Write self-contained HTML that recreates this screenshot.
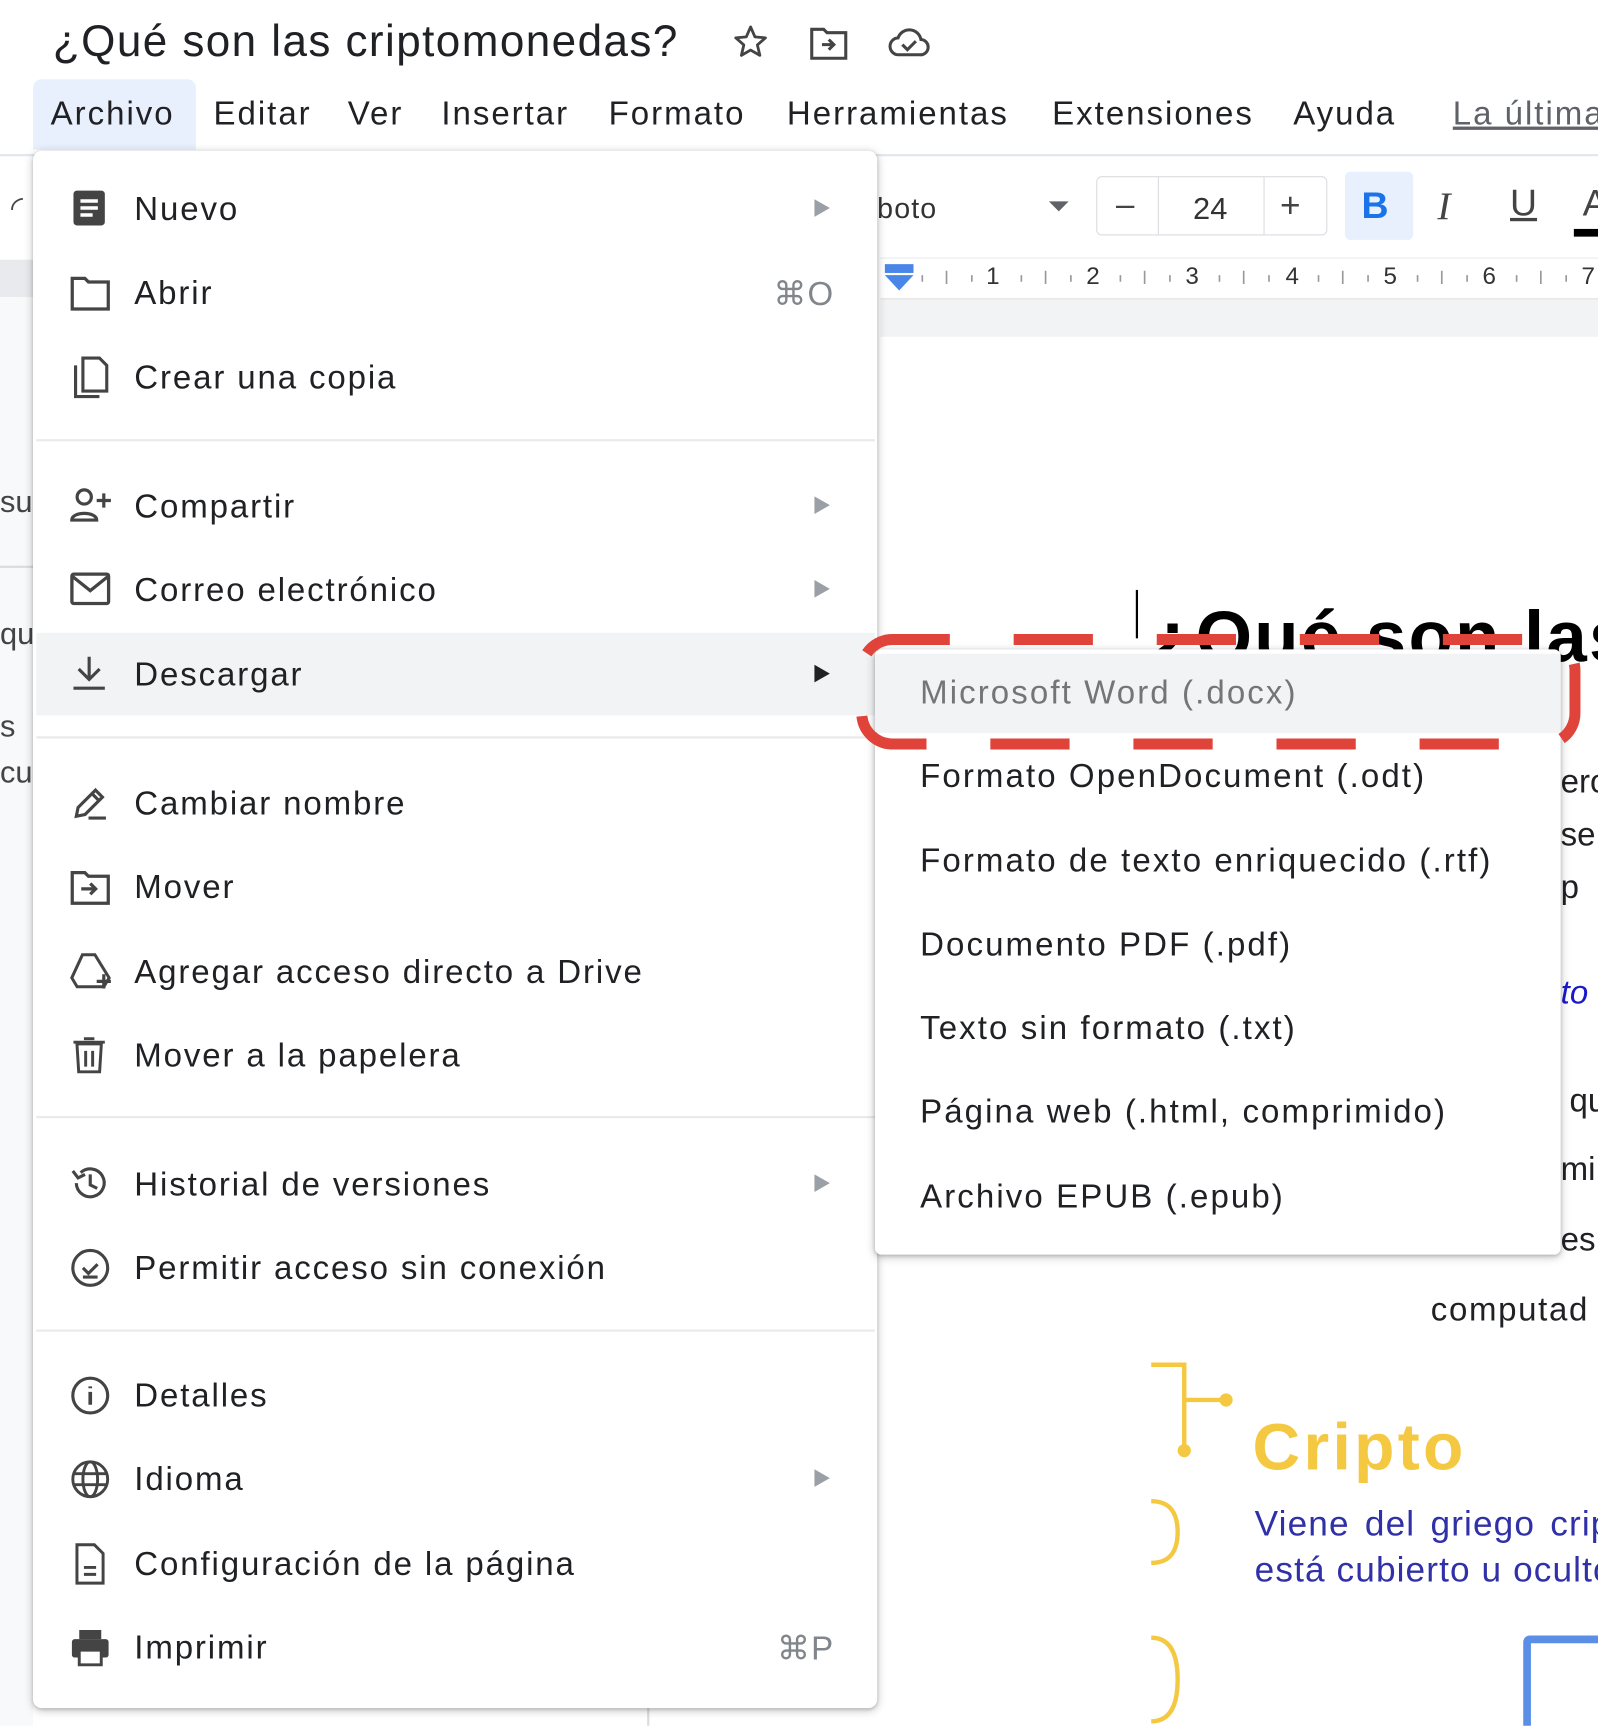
<!DOCTYPE html>
<html><head><meta charset="utf-8"><style>
html,body{margin:0;padding:0;width:1598px;height:1726px;overflow:hidden;background:#fff}
#w{position:absolute;left:0;top:0;width:1452px;height:1568px;transform:scale(1.1006);transform-origin:0 0;font-family:"Liberation Sans",sans-serif;color:#202124;overflow:hidden}
.a{position:absolute;white-space:nowrap}
.mi{position:absolute;left:122px;font-size:30px;color:#202124;letter-spacing:1.7px;margin-top:3px}
.ar{position:absolute;left:740px;width:0;height:0;border-left:14px solid #5f6368;border-top:8px solid transparent;border-bottom:8px solid transparent}
.sc{position:absolute;right:694px;font-size:30px;color:#80868b;margin-top:3px;letter-spacing:1px}
.dv{position:absolute;left:33px;width:762px;height:2px;background:#e8eaed}
.si{position:absolute;left:836px;font-size:30px;color:#202124;letter-spacing:1.9px;margin-top:3px}
.mb{font-size:30px;letter-spacing:1.8px;top:87px}
.ic{position:absolute;left:62px}
</style></head><body><div id="w">
<!-- page bg -->
<div class="a" style="left:0;top:140px;width:1452px;height:2px;background:#e3e6ea"></div>
<div class="a" style="left:800px;top:270px;width:652px;height:36px;background:#f1f3f4"></div>
<div class="a" style="left:0;top:236px;width:30px;height:34px;background:#e8eaed"></div>
<div class="a" style="left:0;top:270px;width:30px;height:1300px;background:#f8f9fa"></div>
<div class="a" style="left:0;top:514px;width:30px;height:2px;background:#dadce0"></div>
<div class="a" style="left:588px;top:1540px;width:2px;height:30px;background:#dadce0"></div>
<div class="a" style="left:0;top:440px;font-size:28px;color:#444">su</div>
<div class="a" style="left:0;top:560px;font-size:28px;color:#444">qu</div>
<div class="a" style="left:0;top:644px;font-size:28px;color:#444">s</div>
<div class="a" style="left:0;top:686px;font-size:28px;color:#444">cu</div>
<!-- title -->
<div class="a" style="left:48px;top:16px;font-size:40px;color:#202124;letter-spacing:1.3px">¿Qué son las criptomonedas?</div>
<svg class="a" style="left:664px;top:20px" width="36" height="36" viewBox="0 0 24 24"><path d="M12 3l2.6 6 6.4.6-4.9 4.3 1.5 6.3L12 17l-5.6 3.2 1.5-6.3L3 9.6l6.4-.6z" fill="none" stroke="#444" stroke-width="1.7" stroke-linejoin="round"/></svg>
<svg class="a" style="left:734px;top:22px" width="38" height="34" viewBox="0 0 24 22"><path d="M2 3h7l2 2h11v15H2z" fill="none" stroke="#444" stroke-width="1.8"/><path d="M8 12h7M12 9l3 3-3 3" fill="none" stroke="#444" stroke-width="1.8"/></svg>
<svg class="a" style="left:806px;top:22px" width="40" height="34" viewBox="0 0 26 22"><path d="M7 18a5 5 0 0 1-.5-10A7 7 0 0 1 20 9a4.5 4.5 0 0 1-.5 9z" fill="none" stroke="#444" stroke-width="1.8"/><path d="M9 12l3 3 5-5" fill="none" stroke="#444" stroke-width="1.8"/></svg>
<!-- menubar -->
<div class="a" style="left:30px;top:72px;width:148px;height:64px;background:#e8f0fe;border-radius:8px 8px 0 0"></div>
<div class="a mb" style="left:46px">Archivo</div>
<div class="a mb" style="left:194px">Editar</div>
<div class="a mb" style="left:316px">Ver</div>
<div class="a mb" style="left:401px">Insertar</div>
<div class="a mb" style="left:553px">Formato</div>
<div class="a mb" style="left:715px">Herramientas</div>
<div class="a mb" style="left:956px">Extensiones</div>
<div class="a mb" style="left:1175px">Ayuda</div>
<div class="a mb" style="left:1320px;color:#5f6368;text-decoration:underline">La última</div>
<!-- toolbar -->
<div class="a" style="left:10px;top:172px;font-size:28px;color:#444">◜</div>
<div class="a" style="left:797px;top:174px;font-size:26px;color:#333;letter-spacing:1px">boto</div>
<div class="a" style="left:953px;top:183px;border-top:9px solid #5f6368;border-left:9px solid transparent;border-right:9px solid transparent"></div>
<div class="a" style="left:996px;top:160px;width:210px;height:54px;border:1px solid #dadce0;border-radius:5px;box-sizing:border-box"></div>
<div class="a" style="left:1052px;top:161px;width:1px;height:52px;background:#dadce0"></div>
<div class="a" style="left:1148px;top:161px;width:1px;height:52px;background:#dadce0"></div>
<div class="a" style="left:1014px;top:170px;font-size:30px;color:#444">–</div>
<div class="a" style="left:1084px;top:174px;font-size:28px;color:#333">24</div>
<div class="a" style="left:1163px;top:168px;font-size:32px;color:#444">+</div>
<div class="a" style="left:1222px;top:156px;width:62px;height:62px;background:#e8f0fe;border-radius:5px"></div>
<div class="a" style="left:1237px;top:168px;font-size:34px;font-weight:bold;color:#1a73e8">B</div>
<div class="a" style="left:1306px;top:166px;font-size:36px;font-style:italic;font-family:'Liberation Serif',serif;color:#444">I</div>
<div class="a" style="left:1372px;top:166px;font-size:34px;color:#444;text-decoration:underline">U</div>
<div class="a" style="left:1438px;top:166px;font-size:34px;color:#444">A</div>
<div class="a" style="left:1430px;top:208px;width:24px;height:7px;background:#000"></div>
<!-- ruler -->
<div class="a" style="left:800px;top:234px;width:652px;height:36px;background:#fff;border-top:1px solid #e8eaed;border-bottom:1px solid #e0e0e0"></div>
<svg class="a" style="left:802px;top:238px" width="30" height="28"><rect x="2" y="2" width="26" height="8" fill="#4a86e8"/><path d="M2 12h26l-13 14z" fill="#4a86e8"/></svg>
<div class="a" style="left:896px;top:238px;font-size:22px;color:#333">1</div>
<div class="a" style="left:987px;top:238px;font-size:22px;color:#333">2</div>
<div class="a" style="left:1077px;top:238px;font-size:22px;color:#333">3</div>
<div class="a" style="left:1168px;top:238px;font-size:22px;color:#333">4</div>
<div class="a" style="left:1257px;top:238px;font-size:22px;color:#333">5</div>
<div class="a" style="left:1347px;top:238px;font-size:22px;color:#333">6</div>
<div class="a" style="left:1437px;top:238px;font-size:22px;color:#333">7</div>
<svg class="a" style="left:830px;top:242px" width="622" height="20"><g stroke="#999" stroke-width="1.5"><path d="M30 4v12M120 4v12M210 4v12M300 4v12M390 4v12M480 4v12M570 4v12"/><path d="M8 8v6M53 8v6M98 8v6M143 8v6M188 8v6M233 8v6M278 8v6M323 8v6M368 8v6M413 8v6M458 8v6M503 8v6M548 8v6M593 8v6"/></g></svg>
<!-- doc content right -->
<div class="a" style="left:1032px;top:536px;width:2px;height:44px;background:#000"></div>
<div class="a" style="left:1044px;top:540px;font-size:66px;font-weight:bold;color:#000;letter-spacing:2px">¿Qué son las</div>
<div class="a" style="left:1418px;top:694px;font-size:30px">ero</div>
<div class="a" style="left:1418px;top:742px;font-size:30px">se,</div>
<div class="a" style="left:1418px;top:790px;font-size:30px">p</div>
<div class="a" style="left:1418px;top:886px;font-size:30px;color:#1a1acc;font-style:italic">to</div>
<div class="a" style="left:1426px;top:984px;font-size:30px">qu</div>
<div class="a" style="left:1418px;top:1046px;font-size:30px">mi</div>
<div class="a" style="left:1418px;top:1110px;font-size:30px">es</div>
<div class="a" style="left:1300px;top:1174px;font-size:30px;letter-spacing:1.5px">computad</div>
<svg class="a" style="left:1040px;top:1234px" width="90" height="100"><g fill="none" stroke="#f5c842" stroke-width="4"><path d="M6 6h30v74M36 38h36"/></g><circle cx="74" cy="38" r="6" fill="#f5c842"/><circle cx="36" cy="84" r="6" fill="#f5c842"/></svg>
<div class="a" style="left:1138px;top:1280px;font-size:60px;font-weight:bold;color:#f5c842;letter-spacing:3px">Cripto</div>
<svg class="a" style="left:1040px;top:1360px" width="40" height="64"><path d="M6 4q24 0 24 28t-24 28" fill="none" stroke="#f5c842" stroke-width="4"/></svg>
<svg class="a" style="left:1040px;top:1484px" width="40" height="84"><path d="M6 4q24 0 24 38t-24 38" fill="none" stroke="#f5c842" stroke-width="4"/></svg>
<div class="a" style="left:1140px;top:1366px;font-size:32px;color:#3030a8;word-spacing:4px;letter-spacing:1px">Viene del griego crip</div>
<div class="a" style="left:1140px;top:1408px;font-size:32px;color:#3030a8;letter-spacing:1px">está cubierto u oculto</div>
<div class="a" style="left:1384px;top:1486px;width:80px;height:90px;border:7px solid #5b8ee6;border-radius:6px;box-sizing:border-box"></div>
<!-- main menu -->
<div class="a" style="left:30px;top:137px;width:767px;height:1415px;background:#fff;border-radius:8px;box-shadow:0 2px 8px rgba(0,0,0,.25),0 1px 3px rgba(0,0,0,.15)"></div>
<div class="a" style="left:33px;top:575px;width:762px;height:75px;background:#f1f3f4"></div>
<div class="dv" style="top:399px"></div><div class="dv" style="top:669px"></div><div class="dv" style="top:1014px"></div><div class="dv" style="top:1208px"></div>
<div class="mi" style="top:171px">Nuevo</div><div class="ar" style="top:181px;border-left-color:#9aa0a6"></div>
<div class="mi" style="top:247px">Abrir</div><div class="sc" style="top:247px">⌘O</div>
<div class="mi" style="top:324px">Crear una copia</div>
<div class="mi" style="top:441px">Compartir</div><div class="ar" style="top:451px;border-left-color:#9aa0a6"></div>
<div class="mi" style="top:517px">Correo electrónico</div><div class="ar" style="top:527px;border-left-color:#9aa0a6"></div>
<div class="mi" style="top:594px">Descargar</div><div class="ar" style="top:604px;border-left-color:#202124"></div>
<div class="mi" style="top:711px">Cambiar nombre</div>
<div class="mi" style="top:787px">Mover</div>
<div class="mi" style="top:864px">Agregar acceso directo a Drive</div>
<div class="mi" style="top:940px">Mover a la papelera</div>
<div class="mi" style="top:1057px">Historial de versiones</div><div class="ar" style="top:1067px;border-left-color:#9aa0a6"></div>
<div class="mi" style="top:1133px">Permitir acceso sin conexión</div>
<div class="mi" style="top:1249px">Detalles</div>
<div class="mi" style="top:1325px">Idioma</div><div class="ar" style="top:1335px;border-left-color:#9aa0a6"></div>
<div class="mi" style="top:1402px">Configuración de la página</div>
<div class="mi" style="top:1478px">Imprimir</div><div class="sc" style="top:1478px">⌘P</div>
<!-- menu icons -->
<svg class="ic" style="top:170px" width="38" height="38" viewBox="0 0 24 24"><rect x="3" y="2" width="18" height="20" rx="2" fill="#444"/><path d="M7 8h10M7 12h10M7 16h7" stroke="#fff" stroke-width="2"/></svg>
<svg class="ic" style="top:248px" width="40" height="36" viewBox="0 0 24 22"><path d="M2 3h7l2 2h11v15H2z" fill="none" stroke="#444" stroke-width="1.8"/></svg>
<svg class="ic" style="top:320px" width="40" height="44" viewBox="0 0 24 26"><path d="M8 3h9l4 4v14H8z" fill="none" stroke="#444" stroke-width="1.7"/><path d="M4 7v17h13" fill="none" stroke="#444" stroke-width="1.7"/></svg>
<svg class="ic" style="top:440px" width="42" height="36" viewBox="0 0 26 22"><circle cx="9" cy="7" r="4" fill="none" stroke="#444" stroke-width="1.8"/><path d="M2 20c0-5 14-5 14 0z" fill="none" stroke="#444" stroke-width="1.8"/><path d="M20 5v8M16 9h8" stroke="#444" stroke-width="1.8"/></svg>
<svg class="ic" style="top:518px" width="40" height="34" viewBox="0 0 24 20"><rect x="2" y="2" width="20" height="16" rx="1" fill="none" stroke="#444" stroke-width="1.8"/><path d="M2 3l10 8 10-8" fill="none" stroke="#444" stroke-width="1.8"/></svg>
<svg class="ic" style="top:592px" width="38" height="38" viewBox="0 0 24 24"><path d="M12 3v13M6 10l6 6 6-6M3 21h18" fill="none" stroke="#444" stroke-width="1.8"/></svg>
<svg class="ic" style="top:710px" width="40" height="38" viewBox="0 0 24 24"><path d="M4 20l1-5 10-10 4 4-10 10zM13 7l4 4" fill="none" stroke="#444" stroke-width="1.8"/><path d="M11 21h10" stroke="#444" stroke-width="1.8"/></svg>
<svg class="ic" style="top:788px" width="40" height="36" viewBox="0 0 24 22"><path d="M2 3h7l2 2h11v15H2z" fill="none" stroke="#444" stroke-width="1.8"/><path d="M7 12h8M12 9l3 3-3 3" fill="none" stroke="#444" stroke-width="1.8"/></svg>
<svg class="ic" style="top:862px" width="42" height="40" viewBox="0 0 26 24"><path d="M8 3h7l8 13-3 5H5l-3-5z" fill="none" stroke="#444" stroke-width="1.7"/><path d="M20 14v8M16 18h8" stroke="#444" stroke-width="1.8"/></svg>
<svg class="ic" style="top:938px" width="38" height="40" viewBox="0 0 24 24"><path d="M5 6h14l-1 16H6zM3 5h18M9 3h6M10 10v9M14 10v9" fill="none" stroke="#444" stroke-width="1.7"/></svg>
<svg class="ic" style="top:1056px" width="40" height="38" viewBox="0 0 24 24"><path d="M4 12a8 8 0 1 0 2.5-6" fill="none" stroke="#444" stroke-width="1.8"/><path d="M2 5l3 4 4-2M12 7v6l4 2" fill="none" stroke="#444" stroke-width="1.8"/></svg>
<svg class="ic" style="top:1132px" width="40" height="40" viewBox="0 0 24 24"><circle cx="12" cy="12" r="9.5" fill="none" stroke="#444" stroke-width="1.7"/><path d="M8 12l3 3 5-5M8 17h8" fill="none" stroke="#444" stroke-width="1.7"/></svg>
<svg class="ic" style="top:1248px" width="40" height="40" viewBox="0 0 24 24"><circle cx="12" cy="12" r="9.5" fill="none" stroke="#444" stroke-width="1.7"/><path d="M12 10v7M12 7v1" stroke="#444" stroke-width="2"/></svg>
<svg class="ic" style="top:1324px" width="40" height="40" viewBox="0 0 24 24"><g fill="none" stroke="#444" stroke-width="1.6"><circle cx="12" cy="12" r="9.5"/><ellipse cx="12" cy="12" rx="4" ry="9.5"/><path d="M3 9h18M3 15h18"/></g></svg>
<svg class="ic" style="top:1400px" width="38" height="42" viewBox="0 0 24 26"><path d="M5 2h10l5 5v17H5z" fill="none" stroke="#444" stroke-width="1.7"/><path d="M9 15h7M9 19h7" stroke="#444" stroke-width="1.7"/></svg>
<svg class="ic" style="top:1477px" width="40" height="38" viewBox="0 0 24 22"><path d="M6 2h12v5H6z" fill="#444"/><rect x="2" y="7" width="20" height="10" rx="1.5" fill="#444"/><path d="M6 13h12v8H6z" fill="#fff" stroke="#444" stroke-width="1.6"/></svg>
<!-- submenu -->
<div class="a" style="left:795px;top:590px;width:623px;height:550px;background:#fff;border-radius:6px;box-shadow:0 2px 8px rgba(0,0,0,.25),0 1px 3px rgba(0,0,0,.15)"></div>
<div class="a" style="left:795px;top:594px;width:623px;height:72px;background:#f1f3f4"></div>
<div class="si" style="top:610px;color:#757575">Microsoft Word (.docx)</div>
<div class="si" style="top:686px">Formato OpenDocument (.odt)</div>
<div class="si" style="top:763px">Formato de texto enriquecido (.rtf)</div>
<div class="si" style="top:839px">Documento PDF (.pdf)</div>
<div class="si" style="top:915px">Texto sin formato (.txt)</div>
<div class="si" style="top:991px">Página web (.html, comprimido)</div>
<div class="si" style="top:1068px">Archivo EPUB (.epub)</div>
<svg class="a" style="left:774px;top:572px" width="666" height="112"><rect x="9" y="9" width="648" height="95" rx="28" fill="none" stroke="#e0433a" stroke-width="10" stroke-dasharray="72 58" stroke-dashoffset="20"/></svg>
</div></body></html>
